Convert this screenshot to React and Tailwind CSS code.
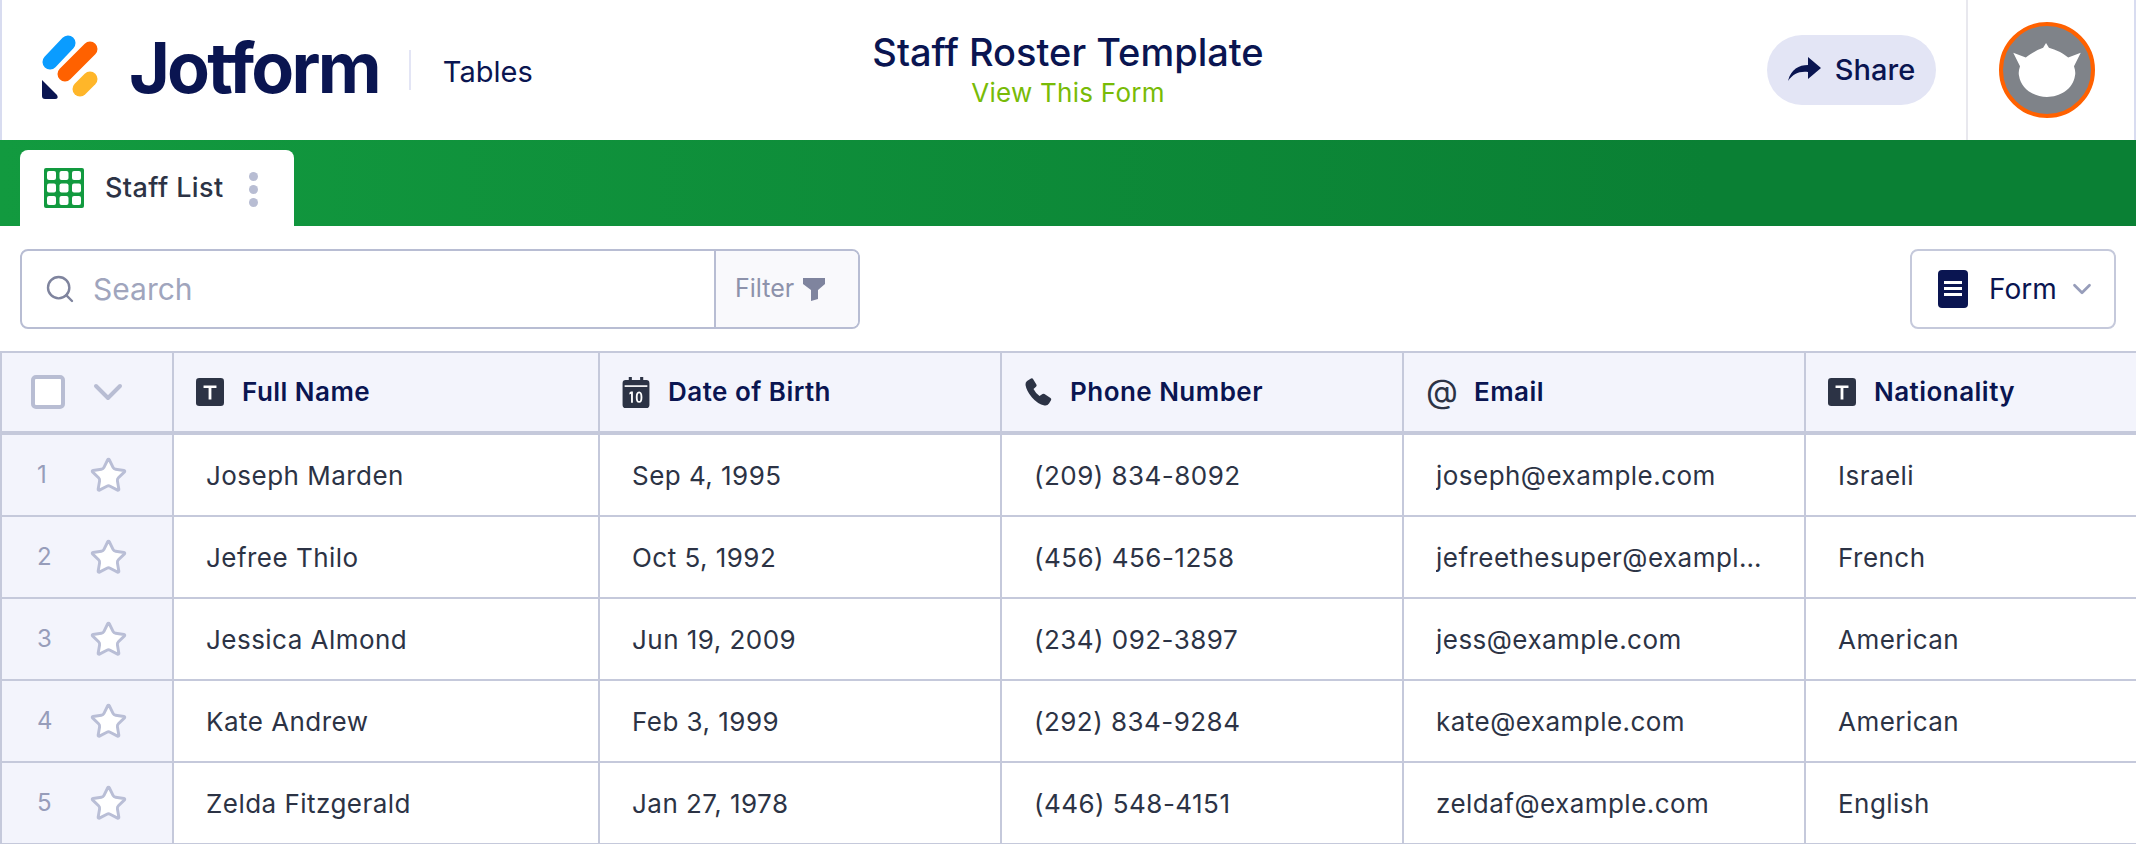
import { ChevronDown, Search, Star } from "lucide-react";

const font = "font-['Inter','Liberation_Sans',sans-serif]";

const columns = [
  { label: "Full Name", icon: "text" },
  { label: "Date of Birth", icon: "date" },
  { label: "Phone Number", icon: "phone" },
  { label: "Email", icon: "email" },
  { label: "Nationality", icon: "text" },
];

const rows = [
  ["Joseph Marden", "Sep 4, 1995", "(209) 834-8092", "joseph@example.com", "Israeli"],
  ["Jefree Thilo", "Oct 5, 1992", "(456) 456-1258", "jefreethesuper@example.com", "French"],
  ["Jessica Almond", "Jun 19, 2009", "(234) 092-3897", "jess@example.com", "American"],
  ["Kate Andrew", "Feb 3, 1999", "(292) 834-9284", "kate@example.com", "American"],
  ["Zelda Fitzgerald", "Jan 27, 1978", "(446) 548-4151", "zeldaf@example.com", "English"],
];

function LogoMark() {
  return (
    <svg width="58" height="64" viewBox="0 0 58 64" className="mb-[6px] ml-[39px] shrink-0">
      <line x1="9" y1="27" x2="27" y2="8" stroke="#0a9cff" strokeWidth="15" strokeLinecap="round" />
      <line x1="24" y1="39" x2="49" y2="14" stroke="#ff6100" strokeWidth="15" strokeLinecap="round" />
      <line x1="39" y1="54" x2="49" y2="44" stroke="#ffb629" strokeWidth="15" strokeLinecap="round" />
      <path d="M1 45 L16 60 Q18 64 14 64 L4 64 Q1 64 1 61 Z" fill="#0a1551" />
    </svg>
  );
}

function GridIcon() {
  return (
    <svg width="40" height="40" viewBox="0 0 40 40" className="shrink-0">
      <rect width="40" height="40" rx="2" fill="#129a3f" />
      {[3, 15.500, 28].map((y) =>
        [3, 15.500, 28].map((x) => <rect key={`${x}-${y}`} x={x} y={y} width="9" height="9" rx="2" fill="#fff" />)
      )}
    </svg>
  );
}

function ColumnIcon({ type }) {
  if (type === "text") {
    return (
      <svg width="28" height="28" viewBox="0 0 26 26" className="shrink-0">
        <rect width="26" height="26" rx="3" fill="#2c3345" />
        <path d="M7 7h12v2.400h-4.700V20h-2.600V9.400H7z" fill="#fff" />
      </svg>
    );
  }
  if (type === "date") {
    return (
      <svg width="28" height="31" viewBox="0 0 26 30" className="shrink-0">
        <path d="M6 0h3v3h8V0h3v3h3a3 3 0 0 1 3 3v21a3 3 0 0 1-3 3H3a3 3 0 0 1-3-3V6a3 3 0 0 1 3-3h3z" fill="#2c3345" />
        <rect x="2" y="8" width="22" height="1.600" fill="#fff" />
        <path d="M8 14h2v11H8.200v-8.800L6.600 17v-1.700zM16 14c2.200 0 3.200 2 3.200 5.500S18.200 25 16 25s-3.200-2-3.200-5.500S13.800 14 16 14zm0 1.700c-1 0-1.400 1.400-1.400 3.800s.4 3.800 1.400 3.800 1.400-1.400 1.400-3.800-.4-3.800-1.400-3.800z" fill="#fff" />
      </svg>
    );
  }
  if (type === "phone") {
    return (
      <svg width="28" height="28" viewBox="0 0 28 28" className="shrink-0">
        <path d="M3 3 L7 0.500 Q8.500 0 9.200 1.200 L12.500 6.800 Q13 8 12 8.800 L9.500 11 Q11.500 15 15.500 18 L18.500 16 Q19.500 15.500 20.500 16 L26.500 20 Q27.800 21 27 22.200 L25 25.500 Q23.500 28 20.500 27.500 Q13.500 26 8 19.500 Q2.500 13 1.500 7 Q1.200 4.500 3 3z" fill="#2c3345" />
      </svg>
    );
  }
  return <span className="w-[30px] shrink-0 pb-[2px] text-[33px] leading-none font-normal text-[#2c3345]">@</span>;
}

function HeaderCell({ column }) {
  return (
    <div className="flex min-w-0 items-center gap-[18px] border-l-2 border-[#c5c9db] pl-[22px]">
      <ColumnIcon type={column.icon} />
      <span className="pb-[2px] text-[26px] font-semibold tracking-[0.018em] text-[#0a1551]">{column.label}</span>
    </div>
  );
}

function Row({ index, values }) {
  return (
    <div className="grid h-[82px] grid-cols-[172px_426px_402px_402px_402px_1fr] border-b-2 border-[#c5c9db]">
      <div className="flex items-center border-l-2 border-[#c5c9db] bg-[#f3f4fc] pl-[35px]">
        <span className="w-[52px] text-[24px] text-[#979dba]">{index}</span>
        <Star size={39} strokeWidth={1.800} className="text-[#b9bed6]" fill="#fff" />
      </div>
      {values.map((value) => (
        <div key={value} className="flex min-w-0 items-center border-l-2 border-[#c5c9db] pr-[38px] pl-[32px]">
          <span className="truncate text-[26px] tracking-[0.018em] text-[#2c3345]">{value}</span>
        </div>
      ))}
    </div>
  );
}

export default function App() {
  return (
    <div className={`h-[844px] w-[2136px] overflow-hidden bg-white ${font}`}>
      <header className="flex h-[140px] items-center border-x-2 border-[#d8dcf0]">
        <div className="flex h-full flex-1 basis-0 items-center">
          <LogoMark />
          <span className="ml-[30px] pb-[4px] text-[70px] leading-none font-bold tracking-[-0.04em] text-[#0a1551]">Jotform</span>
          <div className="ml-[30px] h-[40px] w-[2px] bg-[#e3e5f5]" />
          <span className="ml-[32px] pt-[3px] text-[29px] text-[#0a1551]">Tables</span>
        </div>
        <div className="flex flex-col items-center">
          <span className="text-[38px] leading-[42px] font-medium text-[#0a1551]">Staff Roster Template</span>
          <span className="mt-[4px] text-[26px] leading-[32px] tracking-[0.01em] text-[#78bb07]">View This Form</span>
        </div>
        <div className="flex h-full flex-1 basis-0 items-center justify-end">
          <button className="flex h-[70px] w-[169px] items-center justify-center gap-[13px] rounded-full bg-[#e3e5f5] text-[29px] font-medium text-[#0a1551]">
            <svg width="34" height="26" viewBox="0 0 34 26">
              <path d="M0 24 C3 12 11 8 20 8 V0 L33 11 L20 22 V15 C11 14 5 17 0 24Z" fill="#0a1551" />
            </svg>
            Share
          </button>
          <div className="ml-[30px] flex h-full w-[168px] items-center justify-center border-l-2 border-[#e8e8ee] pr-[8px]">
            <div className="flex h-[96px] w-[96px] items-center justify-center rounded-full border-[4px] border-[#ff6100] bg-[#7f8389]">
              <svg width="68" height="54" viewBox="0 0 70 56">
                <path d="M0 10 L13 15 Q22 8 31 5 L34 0 L37 5 Q48 8 57 15 L70 10 L63 24 Q65 30 64 34 C62 48 48 56 35 56 C22 56 8 48 6 34 Q5 30 7 24Z" fill="#fff" />
              </svg>
            </div>
          </div>
        </div>
      </header>

      <div className="flex h-[86px] items-end bg-[linear-gradient(90deg,#129a3f,#0a8034_80%)] pl-[20px]">
        <div className="flex h-[76px] w-[274px] items-center rounded-t-[8px] bg-white pl-[24px]">
          <GridIcon />
          <span className="ml-[21px] pt-[1px] text-[27px] font-medium tracking-[0.015em] text-[#2c3345]">Staff List</span>
          <div className="mt-[2px] ml-[25px] flex flex-col gap-[4px]">
            <div className="h-[9px] w-[9px] rounded-full bg-[#b8bdd3]" />
            <div className="h-[9px] w-[9px] rounded-full bg-[#b8bdd3]" />
            <div className="h-[9px] w-[9px] rounded-full bg-[#b8bdd3]" />
          </div>
        </div>
      </div>

      <div className="flex h-[125px] items-center justify-between pr-[20px] pl-[20px]">
        <div className="flex h-[80px] w-[840px] overflow-hidden rounded-[8px] border-2 border-[#b8bdd3]">
          <div className="flex flex-1 items-center gap-[17px] pl-[22px]">
            <Search size={32} strokeWidth={1.800} className="text-[#7f849e]" />
            <span className="pt-[1px] text-[30px] text-[#a0a5bd]">Search</span>
          </div>
          <div className="flex w-[144px] items-center gap-[9px] border-l-2 border-[#b8bdd3] bg-[#f9f9fc] pl-[19px]">
            <span className="text-[25px] text-[#8d92ab]">Filter</span>
            <svg width="22" height="24" viewBox="0 0 22 24">
              <path d="M0 1h22v6l-7 6v9l-7 2V13L0 7z" fill="#7f849e" />
            </svg>
          </div>
        </div>
        <div className="flex h-[80px] w-[206px] items-center rounded-[8px] border-2 border-[#c5c9db] pl-[26px]">
          <div className="flex h-[38px] w-[30px] flex-col items-center justify-center gap-[3px] rounded-[4px] bg-[#0a1551]">
            <div className="h-[3px] w-[18px] bg-white" />
            <div className="h-[3px] w-[18px] bg-white" />
            <div className="h-[3px] w-[18px] bg-white" />
          </div>
          <span className="ml-[21px] text-[28px] text-[#0a1551]">Form</span>
          <ChevronDown size={30} strokeWidth={2.200} className="ml-[10px] text-[#979dba]" />
        </div>
      </div>

      <div className="grid h-[84px] grid-cols-[172px_426px_402px_402px_402px_1fr] border-t-2 border-b-[4px] border-[#c5c9db] bg-[#f3f4fc]">
        <div className="flex items-center border-l-2 border-[#c5c9db] pl-[29px]">
          <div className="h-[34px] w-[34px] rounded-[5px] border-[4px] border-[#b8bdd3] bg-white" />
          <ChevronDown size={48} strokeWidth={2} className="ml-[19px] text-[#b8bdd3]" />
        </div>
        {columns.map((column) => (
          <HeaderCell key={column.label} column={column} />
        ))}
      </div>

      {rows.map((values, index) => (
        <Row key={values[0]} index={index + 1} values={values} />
      ))}
    </div>
  );
}
